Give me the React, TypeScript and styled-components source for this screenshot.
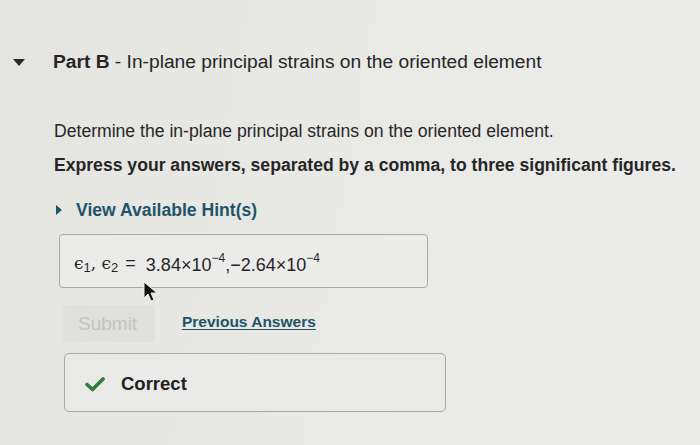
import React from "react";
import styled, { createGlobalStyle } from "styled-components";

const Global = createGlobalStyle`
  html, body { margin: 0; padding: 0; }
  body {
    width: 700px; height: 445px; overflow: hidden;
    background: #e7e7e4;
    font-family: "Liberation Sans", Arial, sans-serif;
    color: #252525;
  }
`;

const Page = styled.div`
  width: 700px;
  height: 445px;
  box-sizing: border-box;
  padding: 51px 0 0 13px;
  background: linear-gradient(100deg, #e4e4e1 0%, #e9e9e6 50%, #ececea 100%);
`;

const Header = styled.div`
  display: flex;
  align-items: center;
  gap: 28px;
  height: 22px;
`;

const Caret = styled.span<{ $dir: "down" | "right"; $color: string; $size: number }>`
  display: inline-block;
  width: 0;
  height: 0;
  ${(p) =>
    p.$dir === "down"
      ? `border-left: ${p.$size}px solid transparent; border-right: ${p.$size}px solid transparent; border-top: ${p.$size + 1}px solid ${p.$color};`
      : `border-top: ${p.$size}px solid transparent; border-bottom: ${p.$size}px solid transparent; border-left: ${p.$size + 1}px solid ${p.$color};`}
`;

const Title = styled.h2`
  margin: 0;
  font-size: 19.2px;
  line-height: 22px;
  font-weight: 400;
  color: #262626;
  b { font-weight: 700; }
`;

const Body = styled.div`
  padding: 48px 0 0 41px;
  display: flex;
  flex-direction: column;
`;

const Para = styled.p<{ $bold?: boolean; $gap: number }>`
  margin: 0 0 ${(p) => p.$gap}px 0;
  font-size: 17.6px;
  line-height: 20px;
  font-weight: ${(p) => (p.$bold ? 700 : 400)};
  color: #262626;
`;

const HintRow = styled.div`
  display: flex;
  align-items: center;
  gap: 14px;
  height: 20px;
  margin: 0 0 0 2px;
  font-size: 17.6px;
  line-height: 20px;
  font-weight: 700;
  color: #1f5468;
`;

const AnswerBox = styled.div`
  margin: 14px 0 0 5px;
  width: 369px;
  height: 54px;
  box-sizing: border-box;
  border: 1px solid #a9a9a7;
  border-radius: 4px;
  background: #ebebe9;
  display: flex;
  align-items: center;
  padding: 5px 0 0 14px;
  position: relative;
  font-size: 18px;
  color: #262626;
`;

const Eps = styled.span`
  font-family: "DejaVu Serif", "Liberation Serif", serif;
  font-size: 17px;
  sub { font-size: 13px; vertical-align: -3px; font-family: "Liberation Sans", sans-serif; }
`;

const Eq = styled.span`
  margin: 0 10px 0 7px;
`;

const Value = styled.span`
  sup { font-size: 12px; vertical-align: 9px; }
`;

const Cursor = styled.svg`
  position: absolute;
  left: 82px;
  top: 46px;
`;

const Actions = styled.div`
  display: flex;
  align-items: center;
  gap: 27px;
  margin: 17px 0 0 9px;
`;

const SubmitBtn = styled.button`
  width: 92px;
  height: 37px;
  border: none;
  border-radius: 3px;
  background: #e0e0dd;
  color: #c3c3c0;
  font-family: "Liberation Sans", Arial, sans-serif;
  font-size: 19px;
  padding: 0 0 0 15px;
  text-align: left;
`;

const PrevLink = styled.a`
  font-size: 15.5px;
  font-weight: 700;
  color: #1f5468;
  text-decoration: underline;
  text-underline-offset: 2px;
  margin-top: -3px;
`;

const FeedbackBox = styled.div`
  margin: 11px 0 0 10px;
  width: 382px;
  height: 59px;
  box-sizing: border-box;
  border: 1px solid #a9a9a7;
  border-radius: 5px;
  background: #e9e9e7;
  display: flex;
  align-items: center;
  gap: 16px;
  padding: 2px 0 0 20px;
  font-size: 18.5px;
  font-weight: 700;
  color: #1f1f1f;
`;

export default function App() {
  return (
    <>
      <Global />
      <Page>
        <Header>
          <Caret $dir="down" $color="#2a2a2a" $size={6} />
          <Title>
            <b>Part B</b> - In-plane principal strains on the oriented element
          </Title>
        </Header>
        <Body>
          <Para $gap={14}>Determine the in-plane principal strains on the oriented element.</Para>
          <Para $bold $gap={25}>Express your answers, separated by a comma, to three significant figures.</Para>
          <HintRow>
            <Caret $dir="right" $color="#1f5468" $size={5} />
            <span>View Available Hint(s)</span>
          </HintRow>
          <AnswerBox>
            <Eps>
              ϵ<sub>1</sub>, ϵ<sub>2</sub>
            </Eps>
            <Eq>=</Eq>
            <Value>
              3.84×10<sup>−4</sup>,−2.64×10<sup>−4</sup>
            </Value>
            <Cursor width="18" height="22" viewBox="0 0 18 22">
              <path d="M2 1 L2 17 L6 13 L9 20 L12 19 L9 12 L15 12 Z" fill="#111" stroke="#eee" strokeWidth="1" />
            </Cursor>
          </AnswerBox>
          <Actions>
            <SubmitBtn>Submit</SubmitBtn>
            <PrevLink>Previous Answers</PrevLink>
          </Actions>
          <FeedbackBox>
            <svg width="20" height="16" viewBox="0 0 20 16">
              <path d="M2 8.5 L7.5 13.5 L18 3" fill="none" stroke="#2e7d3a" strokeWidth="3.6" strokeLinecap="round" strokeLinejoin="round" />
            </svg>
            <span>Correct</span>
          </FeedbackBox>
        </Body>
      </Page>
    </>
  );
}
